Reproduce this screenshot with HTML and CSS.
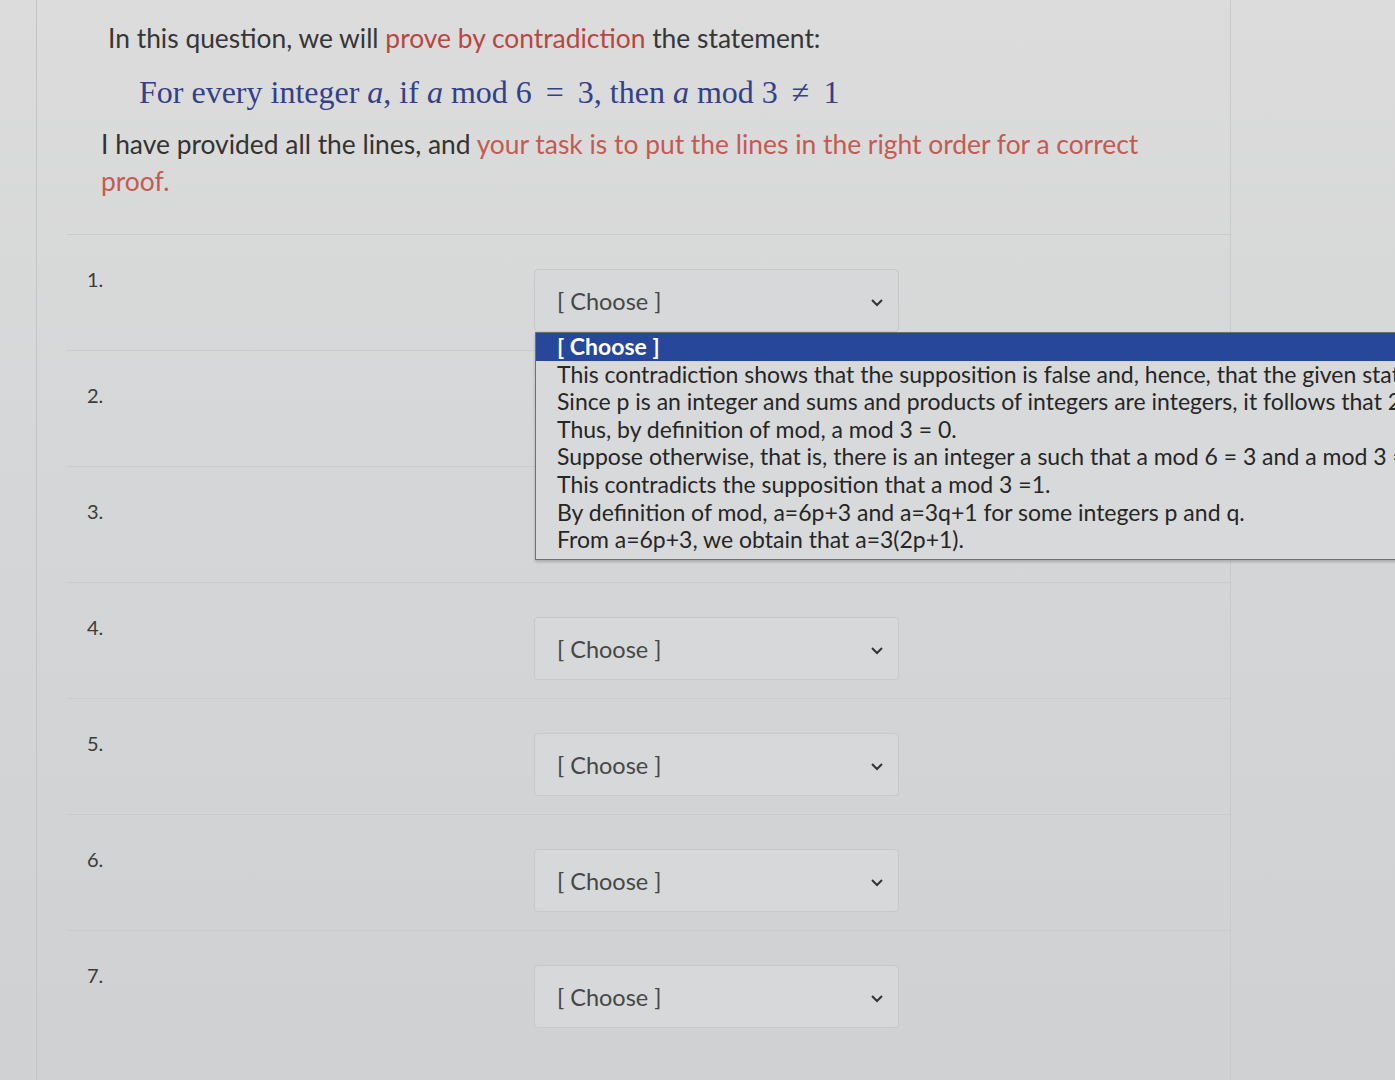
FILE: index.html
```html
<!DOCTYPE html>
<html lang="en">
<head>
<meta charset="utf-8">
<title>Proof by contradiction</title>
<link rel="stylesheet" href="styles.css">
</head>
<body>
<div class="page">
  <div class="card">
    <div class="intro">
      <p class="p1">In this question, we will <span class="red">prove by contradiction</span> the statement:</p>
      <p class="math">For every integer <i>a</i>, if <i>a</i> mod 6 <span class="op">=</span> 3, then <i>a</i> mod 3 <span class="op">&ne;</span> 1</p>
      <p class="p2">I have provided all the lines, and <span class="red2">your task is to put the lines in the right order for a correct proof.</span></p>
    </div>
    <div class="rows">
      <div class="row">
        <div class="num">1.</div>
        <div class="selwrap">
          <div class="select"><span>[ Choose ]</span><svg class="chev" viewBox="0 0 14 10" width="14" height="10"><path d="M2 2 L7 7 L12 2" fill="none" stroke="#333" stroke-width="2"/></svg></div>
          <ul class="listbox">
            <li class="sel">[ Choose ]</li>
            <li>This contradiction shows that the supposition is false and, hence, that the given statement is true.</li>
            <li>Since p is an integer and sums and products of integers are integers, it follows that 2p+1 is an integer.</li>
            <li>Thus, by definition of mod, a mod 3 = 0.</li>
            <li>Suppose otherwise, that is, there is an integer a such that a mod 6 = 3 and a mod 3 = 1.</li>
            <li>This contradicts the supposition that a mod 3 =1.</li>
            <li>By definition of mod, a=6p+3 and a=3q+1 for some integers p and q.</li>
            <li>From a=6p+3, we obtain that a=3(2p+1).</li>
          </ul>
        </div>
      </div>
      <div class="row">
        <div class="num">2.</div>
      </div>
      <div class="row">
        <div class="num">3.</div>
      </div>
      <div class="row">
        <div class="num">4.</div>
        <div class="selwrap"><div class="select"><span>[ Choose ]</span><svg class="chev" viewBox="0 0 14 10" width="14" height="10"><path d="M2 2 L7 7 L12 2" fill="none" stroke="#333" stroke-width="2"/></svg></div></div>
      </div>
      <div class="row">
        <div class="num">5.</div>
        <div class="selwrap"><div class="select"><span>[ Choose ]</span><svg class="chev" viewBox="0 0 14 10" width="14" height="10"><path d="M2 2 L7 7 L12 2" fill="none" stroke="#333" stroke-width="2"/></svg></div></div>
      </div>
      <div class="row">
        <div class="num">6.</div>
        <div class="selwrap"><div class="select"><span>[ Choose ]</span><svg class="chev" viewBox="0 0 14 10" width="14" height="10"><path d="M2 2 L7 7 L12 2" fill="none" stroke="#333" stroke-width="2"/></svg></div></div>
      </div>
      <div class="row">
        <div class="num">7.</div>
        <div class="selwrap"><div class="select"><span>[ Choose ]</span><svg class="chev" viewBox="0 0 14 10" width="14" height="10"><path d="M2 2 L7 7 L12 2" fill="none" stroke="#333" stroke-width="2"/></svg></div></div>
      </div>
    </div>
  </div>
</div>
</body>
</html>
```

FILE: styles.css
```css
html, body {
  margin: 0;
  padding: 0;
  height: 100%;
}
body {
  font-family: Lato, "Noto Sans", sans-serif;
  background: linear-gradient(180deg, #dcdcdc 0%, #d5d6d7 45%, #cfd1d2 100%);
  color: #2d2d2d;
  overflow: hidden;
}
.page {
  width: 1395px;
  height: 1080px;
  padding-left: 36px;
  box-sizing: border-box;
}
.card {
  width: 1195px;
  height: 1080px;
  border-left: 1px solid #c2c4c5;
  border-right: 1px solid #c8cacb;
  box-sizing: border-box;
}
.intro {
  padding: 20px 0 0 64px;
}
.intro p {
  margin: 0;
}
.p1 {
  font-size: 26.4px;
  line-height: 36px;
  color: #363636;
  padding-left: 7px;
}
.red {
  color: #b9463f;
}
.math {
  font-family: "Liberation Serif", "DejaVu Serif", serif;
  font-size: 32px;
  line-height: 38px;
  color: #33408a;
  padding: 17px 0 0 38px;
}
.math i {
  font-style: italic;
}
.op {
  margin: 0 6px;
}
.p2 {
  font-size: 26.4px;
  line-height: 37px;
  color: #333;
  padding-top: 15px;
  width: 1075px;
}
.red2 {
  color: #c45a53;
}
.rows {
  margin-top: 34px;
  padding-left: 30px;
}
.row {
  height: 116px;
  border-top: 1px solid #c9cbcc;
  display: flex;
  align-items: flex-start;
  box-sizing: border-box;
}
.num {
  width: 467px;
  padding: 31px 0 0 20px;
  font-size: 20px;
  line-height: 26px;
  color: #3b3b3b;
  box-sizing: border-box;
}
.selwrap {
  position: relative;
  padding-top: 34px;
}
.select {
  width: 365px;
  height: 63px;
  border: 1px solid #c6c8ca;
  border-radius: 4px;
  background: #d6d8d9;
  display: flex;
  align-items: center;
  justify-content: space-between;
  padding: 0 14px 0 22px;
  box-sizing: border-box;
  font-size: 23.5px;
  color: #474747;
}
.chev {
  margin-top: 4px;
}
.listbox {
  position: absolute;
  left: 1px;
  top: 97px;
  width: 1000px;
  margin: 0;
  padding: 0 0 5px 0;
  list-style: none;
  background: #d8d9da;
  border: 1px solid #6e7072;
  box-shadow: 0 2px 3px rgba(0,0,0,0.2);
  font-size: 23px;
  line-height: 27.6px;
  color: #262626;
  white-space: nowrap;
  z-index: 5;
}
.listbox li {
  padding-left: 21px;
}
.listbox li.sel {
  background: #27479a;
  color: #ffffff;
  font-weight: 700;
}
```
